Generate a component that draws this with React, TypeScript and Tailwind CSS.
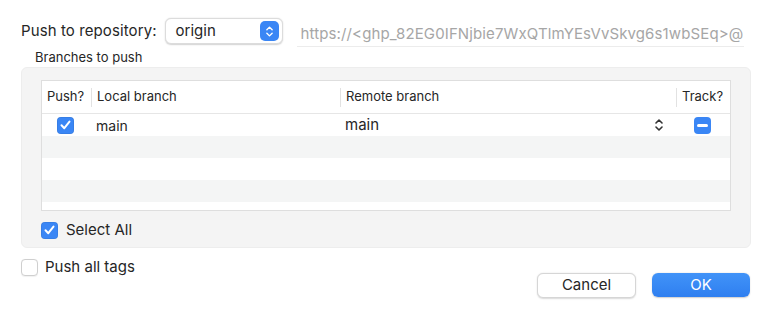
import React from "react";

const Check = () => (
  <svg width="11" height="10" viewBox="0 0 11 10" fill="none">
    <path d="M1.5 5.3 L4.3 8.2 L9.5 1.6" stroke="white" strokeWidth="2" strokeLinecap="round" strokeLinejoin="round" />
  </svg>
);

const BlueCheckbox = () => (
  <div className="w-[17px] h-[17px] rounded-[4px] bg-[#3a86f5] flex items-center justify-center shadow-[inset_0_0_0_0.5px_rgba(0,0,0,0.12)]">
    <Check />
  </div>
);

const UpDown = ({ color, w = 8, h = 14 }: { color: string; w?: number; h?: number }) => (
  <svg width={w} height={h} viewBox="0 0 8 14" fill="none">
    <path d="M1 5 L4 2 L7 5" stroke={color} strokeWidth="1.6" strokeLinecap="round" strokeLinejoin="round" />
    <path d="M1 9 L4 12 L7 9" stroke={color} strokeWidth="1.6" strokeLinecap="round" strokeLinejoin="round" />
  </svg>
);

export default function App() {
  return (
    <div className="w-[768px] h-[318px] bg-white text-[#262626] font-['Inter',sans-serif] overflow-hidden flex flex-col">
      {/* Top row */}
      <div className="flex items-start pl-[21px] pt-[18px]">
        <div className="h-[26px] flex items-center text-[15px] tracking-[0.1px]">Push to repository:</div>
        <div className="ml-[8px] w-[118px] h-[26px] rounded-[6px] bg-white border border-[#dcdcdc] shadow-[0_0.5px_1.5px_rgba(0,0,0,0.18)] flex items-center justify-between pl-[10px] pr-[3px]">
          <span className="text-[15px]">origin</span>
          <div className="w-[19px] h-[20px] rounded-[5px] bg-[#3a86f5] flex items-center justify-center">
            <UpDown color="white" w={7} h={13} />
          </div>
        </div>
        <div className="ml-[14px] mt-[5px] w-[447px] h-[24px] border-b border-[#ececec] flex items-center pl-[4px] overflow-hidden whitespace-nowrap">
          <span className="text-[15px] text-[#a6a6a6] tracking-[0.12px]">https://&lt;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&gt;@</span>
        </div>
      </div>

      {/* Group label */}
      <div className="pl-[35px] mt-[3px] h-[16px] flex items-center text-[13px]">Branches to push</div>

      {/* Group box */}
      <div className="ml-[21px] mt-[1px] w-[730px] h-[181px] rounded-[6px] bg-[#f4f4f4] border border-[#ededed] flex flex-col px-[19px] pt-[12px]">
        <div className="w-[690px] h-[131px] bg-white border border-[#dedede] flex flex-col">
          {/* Header */}
          <div className="h-[33px] border-b border-[#e6e6e6] flex items-center text-[13px]">
            <div className="w-[49px] pl-[5px]">Push?</div>
            <div className="w-[249px] h-[19px] border-l border-[#e2e2e2] pl-[5px] flex items-center">Local branch</div>
            <div className="w-[336px] h-[19px] border-l border-[#e2e2e2] pl-[5px] flex items-center">Remote branch</div>
            <div className="flex-1 h-[19px] border-l border-[#e2e2e2] pl-[5px] flex items-center">Track?</div>
          </div>
          {/* Row 1 */}
          <div className="h-[22px] flex items-center bg-white">
            <div className="w-[49px] pl-[15px]">
              <BlueCheckbox />
            </div>
            <div className="w-[249px] pl-[5px] text-[14px]">main</div>
            <div className="w-[336px] pl-[5px] pr-[13px] flex items-center justify-between">
              <span className="text-[15px]">main</span>
              <UpDown color="#333333" />
            </div>
            <div className="flex-1 flex justify-center pr-[2px]">
              <div className="w-[17px] h-[17px] rounded-[4px] bg-[#3a86f5] flex items-center justify-center">
                <div className="w-[11px] h-[3px] rounded-full bg-white" />
              </div>
            </div>
          </div>
          <div className="h-[22px] bg-[#f4f5f5]" />
          <div className="h-[22px] bg-white" />
          <div className="h-[22px] bg-[#f4f5f5]" />
          <div className="flex-1 bg-white" />
        </div>
        <div className="mt-[8px] flex items-center gap-[8px]">
          <BlueCheckbox />
          <span className="text-[15px]">Select All</span>
        </div>
      </div>

      {/* Bottom */}
      <div className="flex items-start pl-[21px] mt-[11px]">
        <div className="flex items-center gap-[7px] h-[17px]">
          <div className="w-[17px] h-[17px] rounded-[4px] bg-white border border-[#cfcfcf] shadow-[0_0.5px_1px_rgba(0,0,0,0.06)]" />
          <span className="text-[15px]">Push all tags</span>
        </div>
        <div className="ml-auto mr-[18px] mt-[14px] flex items-start gap-[16px]">
          <button className="w-[99px] h-[25px] rounded-[6px] bg-white border border-[#d6d6d6] shadow-[0_0.5px_1.5px_rgba(0,0,0,0.15)] text-[15px] text-[#262626] flex items-center justify-center">
            Cancel
          </button>
          <button className="w-[98px] h-[24px] rounded-[6px] bg-gradient-to-b from-[#4193f8] to-[#2f7ff0] text-white text-[15px] flex items-center justify-center shadow-[0_0.5px_1.5px_rgba(0,0,0,0.2)]">
            OK
          </button>
        </div>
      </div>
    </div>
  );
}
